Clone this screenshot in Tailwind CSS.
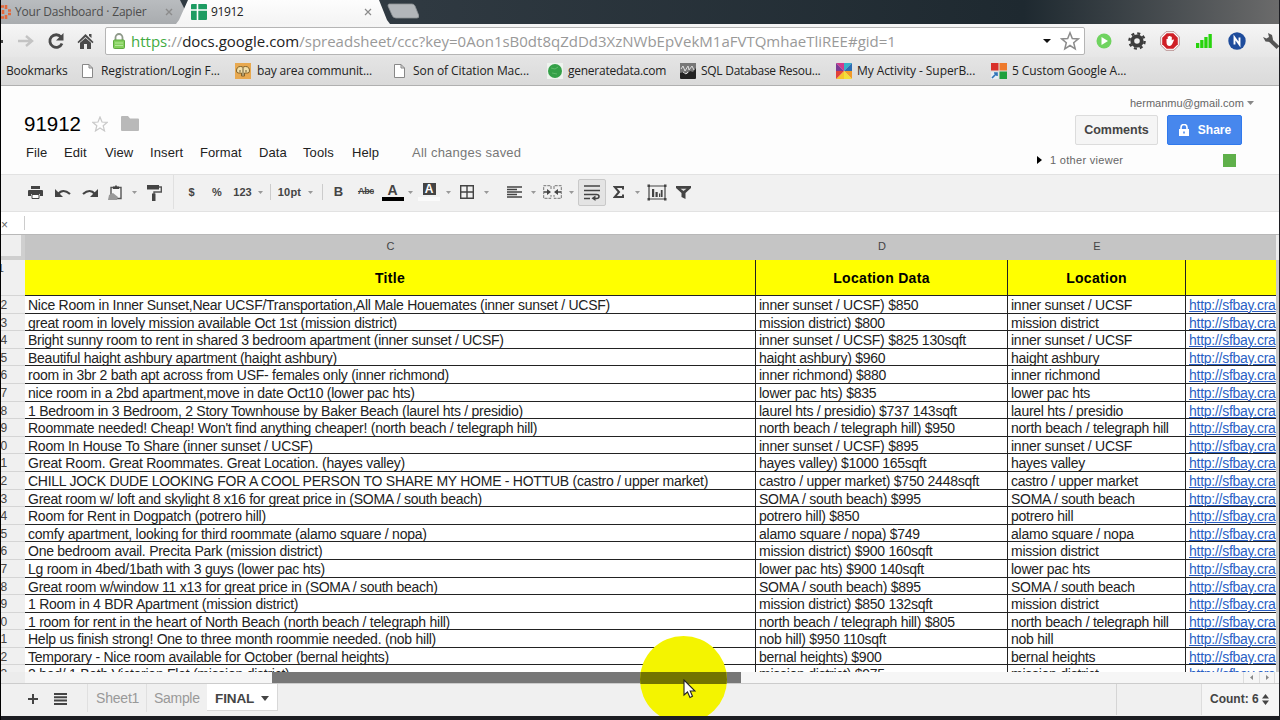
<!DOCTYPE html>
<html lang="en">
<head>
    <meta charset="UTF-8">
    <meta name="viewport" content="width=device-width, initial-scale=1.0">
    <title>91912</title>
    <script src="https://cdn.jsdelivr.net/npm/@tailwindcss/browser@4"></script>
</head>
<body class="bg-black overflow-hidden">
    <div class="relative w-[1280px] h-[720px] px-px flex flex-col overflow-hidden bg-[#1c1d22] font-['Liberation_Sans',Arial,sans-serif] text-[#222]">

        <!-- Tab strip -->
        <div class="h-6 shrink-0 flex items-start bg-linear-to-r from-[#303a42] from-30% via-[#1e2930] via-80% to-[#6b6b6b] font-['Open_Sans',sans-serif] text-[12px] whitespace-nowrap">
            <div class="w-[183px] h-6 flex items-center bg-linear-to-b from-[#b9bcbf] to-[#a9acaf] text-[#4d4d4d] [clip-path:polygon(0_0,179px_0,183px_8px,183px_24px,0_24px)]">
                <svg class="w-[10px] h-4 shrink-0" viewBox="0 0 10 16" fill="none" stroke="#e2683c" stroke-width="2.6"><path d="M0 2.5h3M0 13.5h3M5 1v4M7 6.5h3M7 10h3M5 11v4M2 6v4"/></svg>
                <span class="ml-1 w-[150px] leading-6 -mt-px tracking-[-0.2px]">Your Dashboard · Zapier</span>
                <svg class="w-2 h-2" viewBox="0 0 8 8" stroke="#8b8b8b" stroke-width="1.4"><path d="M1 1l6 6M7 1L1 7"/></svg>
            </div>
            <div class="-ml-[8px] w-[214px] h-6 flex items-center bg-linear-to-b from-[#fdfdfd] to-[#f4f4f4] [clip-path:polygon(12px_0,203px_0,211px_20px,214px_24px,0_24px,3px_20px)]">
                <svg class="ml-[15px] w-4 h-4" viewBox="0 0 16 16"><rect width="16" height="16" rx="1" fill="#1d9c62"/><path d="M6.5 0v16M0 6h16" stroke="#fff" stroke-width="1.6"/></svg>
                <span class="ml-1 w-[153px] leading-6 -mt-px tracking-[-0.4px]">91912</span>
                <svg class="w-2 h-2" viewBox="0 0 8 8" stroke="#8b8b8b" stroke-width="1.2"><path d="M1 1l6 6M7 1L1 7"/></svg>
            </div>
            <svg class="w-8 h-4 mt-[3px] -ml-[3px]" viewBox="0 0 32 16"><path d="M2 1h23q2 0 3 2l4 10q0 2-2 2H9q-3 0-4-3L1 3q0-2 1-2z" fill="#b2b6ba" stroke="#8d9296" stroke-width=".8"/></svg>
        </div>

        <!-- Address bar -->
        <div class="h-[33px] pt-px shrink-0 flex items-center bg-linear-to-b from-[#f6f6f6] to-[#e6e6e6]">
            <svg class="w-[34px] h-5 shrink-0" viewBox="0 0 34 20"><path d="M0 9h2v3H0z" fill="#444"/><path d="M17 10h12M25 5l6 5-6 5" fill="none" stroke="#c3c3c3" stroke-width="2.4"/></svg>
            <svg class="ml-3 w-[18px] h-[18px] shrink-0" viewBox="0 0 18 18"><path d="M14 5A6.3 6.3 0 1 0 15 11.500" fill="none" stroke="#4b4b4b" stroke-width="2.8"/><path d="M16.500 1v7.500H9z" fill="#4b4b4b"/></svg>
            <svg class="ml-3 w-[17px] h-[17px] shrink-0" viewBox="0 0 17 17" fill="#4b4b4b"><path d="M8.500 1L16.500 9l-1 1.200L8.500 4 1.500 10.200.5 9z"/><path d="M3 9.800L8.500 5l5.500 4.800V16h-4v-5H7v5H3zM12 1h2.500v4L12 3z"/></svg>
            <div class="ml-[11px] w-[980px] h-[28px] shrink-0 flex items-center bg-white border border-[#b5b5b5] rounded-[2px] font-['Open_Sans',sans-serif] text-[15px] text-[#999] whitespace-nowrap">
                <svg class="ml-[7px] w-3 h-4" viewBox="0 0 12 16"><path d="M2.500 8V4.500a3.500 3.500 0 0 1 7 0V8" fill="none" stroke="#8f9a8a" stroke-width="1.800"/><rect x=".5" y="7" width="11" height="8.500" rx="1" fill="#83d05c" stroke="#5fa941"/><path d="M2 10h8M2 12.500h8" stroke="#b5e79a"/></svg>
                <span class="ml-[6px] w-[912px] shrink-0 leading-6"><span class="text-[#3fab3f]">https</span>://<span class="text-[#222]">docs.google.com</span>/spreadsheet/ccc?key=0Aon1sB0dt8qZdDd3XzNWbEpVekM1aFVTQmhaeTliREE#gid=1</span>
                <svg class="w-2 h-1 shrink-0" viewBox="0 0 8 4"><path d="M0 0h8L4 4z" fill="#111"/></svg>
                <svg class="ml-[9px] w-5 h-5 shrink-0" viewBox="0 0 20 20"><path d="M10 1.800l2.300 5.700 6 .4-4.600 3.900 1.500 6L10 14.500l-5.200 3.300 1.500-6L1.700 7.900l6-.4z" fill="#fff" stroke="#8c8c8c" stroke-width="1.500"/></svg>
            </div>
            <svg class="ml-[11px] w-4 h-4 shrink-0" viewBox="0 0 16 16"><circle cx="8" cy="8" r="7.500" fill="#6fd35f"/><path d="M5.500 4l6.500 4-6.500 4z" fill="#fff"/></svg>
            <svg class="ml-4 w-[18px] h-[18px] shrink-0" viewBox="0 0 18 18"><circle cx="9" cy="9" r="4.700" fill="none" stroke="#3c3c3c" stroke-width="3.800"/><circle cx="9" cy="9" r="7.600" fill="none" stroke="#3c3c3c" stroke-width="2.400" stroke-dasharray="3 2.970"/></svg>
            <svg class="ml-[14px] w-5 h-5 shrink-0" viewBox="0 0 20 20"><path d="M6 .7h8L19.300 6v8L14 19.300H6L.7 14V6z" fill="#fff" stroke="#a77" stroke-width=".8"/><path d="M6.700 2.200h6.600l4.500 4.500v6.600l-4.500 4.500H6.700l-4.500-4.500V6.700z" fill="#cf1f26"/><path d="M6.500 11V8h1.200V5.500h1.200V5h1.600v.8h1.300v3.700l1.300-1.300.9.800-1.800 4q-1 2-2.700 2-3 0-3-4z" fill="#fff"/></svg>
            <svg class="ml-4 w-4 h-4 shrink-0" viewBox="0 0 16 16" fill="#27d40c"><path d="M0 10h3.300v5H0zM4.200 7h3.300v8H4.200zM8.300 4h3.300v11H8.300zM12.500 1h3.300v14h-3.300z"/></svg>
            <svg class="ml-4 w-[18px] h-[18px] shrink-0" viewBox="0 0 18 18"><circle cx="9" cy="9" r="8.700" fill="#1e4c9c"/><path d="M6.500 12.500v-7l5 7v-7" fill="none" stroke="#fff" stroke-width="1.900"/></svg>
            <svg class="ml-4 w-[17px] h-[18px] shrink-0" viewBox="0 0 17 18"><path d="M8 8l8 7.500" stroke="#555" stroke-width="4"/><path d="M1 5l2.500 4.500 5 .5 2.500-2.500L10 3 6 1l1 4-2.500 1.500z" fill="#555"/></svg>
        </div>

        <!-- Bookmarks bar -->
        <div class="h-[29px] shrink-0 flex items-center bg-linear-to-b from-[#e4e4e4] to-[#dadada] border-b border-[#b0b0b0] font-['Open_Sans',sans-serif] text-[12px] tracking-[-0.08px] whitespace-nowrap">
            <span class="ml-[5px] w-[76px] shrink-0 tracking-[-0.2px]">Bookmarks</span>
            <svg class="w-[11px] h-[14px] shrink-0" viewBox="0 0 11 14"><path d="M.5.5h6.500l3.500 3.500v9.500H.5zM7 .5V4h3.500" fill="#fff" stroke="#888"/></svg>
            <span class="ml-2 w-[134px] shrink-0">Registration/Login F...</span>
            <svg class="w-4 h-4 shrink-0" viewBox="0 0 16 16"><rect width="16" height="16" fill="#e8a950"/><path d="M1.500 8q0-4.500 4-4.500 2 0 2.500 1 .5-1 2.500-1 4 0 4 4.500 0 2-2 2h-3v3H6.500v-3h-3q-2 0-2-2z" fill="#f2dfa9" stroke="#806029"/><path d="M8 4.500v8M5 7v2M11 7v2" stroke="#6b5a38"/></svg>
            <span class="ml-[6px] w-[137px] shrink-0 tracking-[-0.15px]">bay area communit...</span>
            <svg class="w-[11px] h-[14px] shrink-0" viewBox="0 0 11 14"><path d="M.5.5h6.500l3.500 3.500v9.500H.5zM7 .5V4h3.500" fill="#fff" stroke="#888"/></svg>
            <span class="ml-2 w-[134px] shrink-0">Son of Citation Mac...</span>
            <svg class="w-4 h-4 shrink-0" viewBox="0 0 16 16"><rect width="16" height="16" fill="#eef3ee"/><circle cx="8" cy="8" r="7" fill="#34a048"/><path d="M4 5l4 1 3-2M5 10l5 1" stroke="#5cba69" fill="none"/></svg>
            <span class="ml-[5px] w-[112px] shrink-0 tracking-[-0.25px]">generatedata.com</span>
            <svg class="w-4 h-4 shrink-0" viewBox="0 0 16 16"><rect width="16" height="16" rx="1" fill="#222"/><path d="M0 0h16v5l-3 4-3-1-3 3-3-2-4 1z" fill="#777"/><path d="M1 6l2-3 2 5 3-5 1 4 3-4 2 4M3 9l3 2 2-2" stroke="#ddd" fill="none"/></svg>
            <span class="ml-[5px] w-[135px] shrink-0 tracking-[-0.27px]">SQL Database Resou...</span>
            <svg class="w-4 h-4 shrink-0" viewBox="0 0 16 16"><path d="M8 8L0 0h8z" fill="#d13a8c"/><path d="M8 8V0h8z" fill="#35b3c9"/><path d="M8 8l8-8v8z" fill="#2b6cb4"/><path d="M8 8h8v8z" fill="#f09a2a"/><path d="M8 8l8 8H8z" fill="#f3e03a"/><path d="M8 8v8H0z" fill="#f7c52e"/><path d="M8 8l-8 8V8z" fill="#e2413a"/><path d="M8 8H0V0z" fill="#7d3a94"/></svg>
            <span class="ml-[5px] w-[134px] shrink-0">My Activity - SuperB...</span>
            <svg class="w-4 h-4 shrink-0" viewBox="0 0 16 16"><path d="M0 0h7.500v7.500H0z" fill="#d9302a"/><path d="M8.500 0H16v7.500H8.500z" fill="#ee7a2c"/><path d="M8.500 8.500H16V16H8.500z" fill="#1fa03c"/><path d="M0 9h7.500v7H0z" fill="#e4ecf4"/><path d="M1 15l5-5M3 10h3v3" stroke="#2d74b8" stroke-width="1.600" fill="none"/></svg>
            <span class="ml-[5px]">5 Custom Google A...</span>
        </div>

        <!-- Document header -->
        <div class="h-[88px] shrink-0 flex justify-between bg-[#fdfdfd]">
            <div class="pl-[23px] pt-6">
                <div class="h-[27px] flex items-center">
                    <h1 class="w-[68px] text-[20.5px] leading-[27px] text-black">91912</h1>
                    <svg class="w-4 h-4" viewBox="0 0 16 16"><path d="M8 1l2 5 5.300.3-4.100 3.400 1.300 5.200L8 12l-4.500 2.900 1.300-5.200L.7 6.300 6 6z" fill="none" stroke="#c9c9c9" stroke-width="1.200"/></svg>
                    <svg class="ml-[13px] w-[18px] h-[15px]" viewBox="0 0 18 15"><path d="M1 0h6l2 2.500h8q1 0 1 1V14q0 1-1 1H1q-1 0-1-1V1q0-1 1-1z" fill="#b9b9b9"/></svg>
                </div>
                <div class="mt-[6px] pl-[2px] h-5 flex items-center text-[13px] leading-5 tracking-[0.1px] whitespace-nowrap">
                    <span class="w-[38px]">File</span>
                    <span class="w-[41px]">Edit</span>
                    <span class="w-[45px]">View</span>
                    <span class="w-[50px]">Insert</span>
                    <span class="w-[59px]">Format</span>
                    <span class="w-[44px]">Data</span>
                    <span class="w-[49px]">Tools</span>
                    <span class="w-[60px]">Help</span>
                    <span class="text-[#777] tracking-[0.22px]">All changes saved</span>
                </div>
            </div>
            <div class="w-[243px] pt-[9px] text-[11px] text-[#666]">
                <div class="h-4 pl-[94px] flex items-center whitespace-nowrap">
                    <span class="w-[117px]">hermanmu@gmail.com</span>
                    <svg class="w-[7px] h-1" viewBox="0 0 7 4"><path d="M0 0h7L3.500 4z" fill="#888"/></svg>
                </div>
                <div class="mt-1 pl-[39px] flex gap-[9px]">
                    <button class="w-[83px] h-[30px] border border-[#dcdcdc] rounded-[2px] bg-[#f5f5f5] font-bold text-[12.5px] text-[#444]">Comments</button>
                    <button class="w-[75px] h-[30px] pl-[1px] flex items-center justify-center gap-[9px] rounded-[2px] border border-[#3079ed] bg-[#4787ed] font-bold text-[12px] text-white">
                        <svg class="w-[10px] h-3" viewBox="0 0 10 12"><path d="M2 6V3.500a3 3 0 0 1 6 0V6" fill="none" stroke="#fff" stroke-width="1.600"/><path d="M0 5h10v7H0z" fill="#fff"/><path d="M4.200 7.500h1.600v2H4.200z" fill="#4787ed"/></svg>
                        Share
                    </button>
                </div>
                <div class="mt-2 pl-[1px] h-[14px] flex items-center whitespace-nowrap">
                    <svg class="w-[5px] h-2" viewBox="0 0 5 8"><path d="M0 0l5 4-5 4z" fill="#000"/></svg>
                    <span class="ml-[8px] w-[173px] tracking-[0.3px]">1 other viewer</span>
                    <span class="w-[13px] h-[13px] bg-[#5fb04a]"></span>
                </div>
            </div>
        </div>

        <!-- Toolbar -->
        <div class="h-[38px] shrink-0 pl-5 pb-[2px] flex items-center bg-[#f1f1f1] border-y border-[#e2e2e2] font-bold text-[11px] text-[#444] *:shrink-0 *:flex *:items-center *:justify-center">
            <span class="w-7"><svg class="w-[15px] h-[13px]" viewBox="0 0 15 13" fill="#444"><path d="M3 0h9v3H3zM1 4h13q1 0 1 1v5h-3V8H3v2H0V5q0-1 1-1z"/><path d="M4 8.500h7v4H4z" fill="#fff" stroke="#444"/></svg></span>
            <span class="w-[27px]"><svg class="w-4 h-[9px]" viewBox="0 0 16 9"><path d="M3 6q5-6 12 0" fill="none" stroke="#444" stroke-width="2.200"/><path d="M0 1v8h8z" fill="#444"/></svg></span>
            <span class="w-7"><svg class="w-4 h-[9px]" viewBox="0 0 16 9"><path d="M13 6Q8 0 1 6" fill="none" stroke="#444" stroke-width="2.200"/><path d="M16 1v8H8z" fill="#444"/></svg></span>
            <span class="w-[22px]"><svg class="w-[15px] h-[17px]" viewBox="0 0 15 17"><path d="M3 3.500h10v11H3z" fill="#f7f7f7" stroke="#555" stroke-width="1.400"/><path d="M5 2.500h2q1-3 2 0h2V5H5z" fill="#444"/><path d="M0 16l1-5 4-2 5 4-1 3z" fill="#999"/></svg></span>
            <span class="w-4"><svg class="w-[5px] h-[3px]" viewBox="0 0 5 3"><path d="M0 0h5L2.500 3z" fill="#999"/></svg></span>
            <span class="w-6"><svg class="w-[15px] h-[17px]" viewBox="0 0 15 17"><path d="M0 1h12v4.500H0z" fill="#444"/><path d="M12 3h2.300v5H7v2" fill="none" stroke="#555" stroke-width="1.400"/><path d="M5 9.500h3.500V17H5z" fill="#444"/></svg></span>
            <span class="w-[14px]"><i class="w-px h-[34px] bg-[#e0e0e0]"></i></span>
            <span class="w-[23px]">$</span>
            <span class="w-7">%</span>
            <span class="w-[23px]">123</span>
            <span class="w-3"><svg class="w-[5px] h-[3px]" viewBox="0 0 5 3"><path d="M0 0h5L2.500 3z" fill="#999"/></svg></span>
            <span class="w-2"><i class="w-px h-4 bg-[#ccc]"></i></span>
            <span class="w-[31px] tracking-[0.2px]">10pt</span>
            <span class="w-[10px]"><svg class="w-[5px] h-[3px]" viewBox="0 0 5 3"><path d="M0 0h5L2.500 3z" fill="#999"/></svg></span>
            <span class="w-[14px]"><i class="w-px h-4 bg-[#ccc]"></i></span>
            <span class="w-[19px] text-[13px] font-black">B</span>
            <span class="w-9 text-[9px] line-through tracking-[-0.3px]">Abc</span>
            <span class="w-[17px] flex-col text-[14px] leading-[14px]">A<i class="w-[22px] h-[4px] bg-black"></i></span>
            <span class="w-[19px]"><svg class="w-[5px] h-[3px]" viewBox="0 0 5 3"><path d="M0 0h5L2.500 3z" fill="#999"/></svg></span>
            <span class="w-[18px] flex-col"><b class="w-[13px] h-3 text-center text-[12px] leading-3 bg-[#444] text-white">A</b><i class="mt-[2px] w-[22px] h-[4px] bg-[#fafafa]"></i></span>
            <span class="w-5"><svg class="w-[5px] h-[3px]" viewBox="0 0 5 3"><path d="M0 0h5L2.500 3z" fill="#999"/></svg></span>
            <span class="w-[18px]"><svg class="w-[14px] h-[14px]" viewBox="0 0 14 14"><path d="M.7.7h12.600v12.600H.7zM7 0v14M0 7h14" fill="none" stroke="#444" stroke-width="1.400"/></svg></span>
            <span class="w-5"><svg class="w-[5px] h-[3px]" viewBox="0 0 5 3"><path d="M0 0h5L2.500 3z" fill="#999"/></svg></span>
            <span class="w-8 pl-1"><svg class="w-[15px] h-3" viewBox="0 0 15 12"><path d="M0 1h15M0 3.500h10M0 6h15M0 8.500h10M0 11h15" stroke="#444" stroke-width="1.300"/></svg></span>
            <span class="w-[10px]"><svg class="w-[5px] h-[3px]" viewBox="0 0 5 3"><path d="M0 0h5L2.500 3z" fill="#999"/></svg></span>
            <span class="w-7"><svg class="w-[19px] h-[14px]" viewBox="0 0 19 14"><path d="M8 4V.7H.7v12.600H8V10M11 4V.7h7.300v12.600H11V10" fill="none" stroke="#777" stroke-dasharray="3 1"/><path d="M1 7h3.500M18 7h-3.500" stroke="#444" stroke-width="1.500"/><path d="M4 4l4 3-4 3zM15 4l-4 3 4 3z" fill="#444"/></svg></span>
            <span class="w-[11px]"><svg class="w-[5px] h-[3px]" viewBox="0 0 5 3"><path d="M0 0h5L2.500 3z" fill="#999"/></svg></span>
            <span class="w-[30px]"><i class="w-7 h-[27px] flex items-center justify-center bg-[#e4e4e4] border border-[#c9c9c9] rounded-[2px]"><svg class="w-4 h-[17px]" viewBox="0 0 16 17"><path d="M0 2h16M0 6.500h16M0 10.500h12.500q2.500 0 2.500 2t-2.500 2H10M0 14.500h6" fill="none" stroke="#444" stroke-width="1.500"/><path d="M11.500 11.500v5.500l-4-2.700z" fill="#444"/></svg></i></span>
            <span class="w-[22px]"><svg class="w-[11px] h-3" viewBox="0 0 11 12"><path d="M10 3.500V1H1.700L6 6l-4.300 5H10V8.500" fill="none" stroke="#444" stroke-width="2"/></svg></span>
            <span class="w-4"><svg class="w-[5px] h-[3px]" viewBox="0 0 5 3"><path d="M0 0h5L2.500 3z" fill="#999"/></svg></span>
            <span class="w-[23px]"><svg class="w-5 h-[17px]" viewBox="0 0 20 17"><path d="M2 2h16v13H2z" fill="none" stroke="#444" stroke-width="1.200"/><path d="M.5.5H3v2.500H.5zM17 .5h2.500V3H17zM.5 14H3v2.500H.5zM17 14h2.500v2.500H17zM5 5h2.200v8H5zM8.500 8h2.200v5H8.500zM12 9.500h1.200V13H12zM13.800 6h1.800v7h-1.800z" fill="#444"/></svg></span>
            <span class="w-[30px]"><svg class="w-[15px] h-[13px]" viewBox="0 0 15 13"><path d="M0 0h15v2L9.500 7v6L5.500 11V7L0 2z" fill="#444"/><path d="M4.500 2.800h6L7.500 5z" fill="#ddd"/></svg></span>
        </div>

        <!-- Formula bar -->
        <div class="h-[22px] shrink-0 flex items-center bg-white text-[12px] text-[#666]">
            <span class="w-[23px] pt-[3px] leading-4">×</span>
            <span class="w-px h-[14px] bg-[#ccc]"></span>
        </div>

        <!-- Column headings -->
        <div class="h-[26px] shrink-0 flex bg-[#c5c5c5] border-t border-[#b8b8b8] text-[11px] leading-[23px] text-center text-[#444]">
            <span class="w-6 pr-1 pb-[4px] bg-[#cfcfcf]"><i class="block h-full bg-[#efefef]"></i></span>
            <span class="w-[731px]">C</span>
            <span class="w-[252px]">D</span>
            <span class="w-[178px]">E</span>
            <span class="grow"></span>
            <span class="w-[3px] bg-[#ececec]"></span>
        </div>

        <!-- Cells -->
        <div class="h-[412px] shrink-0 flex overflow-hidden bg-white">
            <div class="w-[1275px] shrink-0 overflow-hidden">
                <div class="h-9 flex text-[14px] leading-[36px] tracking-[0.3px] font-bold text-center text-black">
                    <span class="w-6 shrink-0 bg-[#f0f0f0] border-b border-[#d5d5d5] text-[11px] leading-4 font-normal text-[#444]"><i class="block -ml-[5px] w-[10px] not-italic">1</i></span>
                    <span class="w-[731px] shrink-0 bg-[#ff0] border-r border-b border-[#222]">Title</span>
                    <span class="w-[252px] shrink-0 bg-[#ff0] border-r border-b border-[#222]">Location Data</span>
                    <span class="w-[178px] shrink-0 bg-[#ff0] border-r border-b border-[#222]">Location</span>
                    <span class="w-[92px] shrink-0 bg-[#ff0] border-b border-[#222]"></span>
                </div>
                <div id="rows"></div>
            </div>
            <div class="grow bg-[#c9c9c9]"></div>
        </div>

        <!-- Horizontal scrollbar -->
        <div class="h-3 shrink-0 flex bg-[#f6f6f6] border-b border-[#ccc]">
            <span class="w-6 bg-[#ececec]"></span>
            <span class="w-[247px]"></span>
            <span class="w-[469px] bg-[#777]"></span>
            <span class="w-[502px]"></span>
            <span class="w-4 flex items-center justify-center border-l border-[#ddd]"><svg class="w-[3px] h-[5px]" viewBox="0 0 3 5"><path d="M3 0v5L0 2.500z" fill="#888"/></svg></span>
            <span class="w-4 flex items-center justify-center border-x border-[#ddd]"><svg class="w-[3px] h-[5px]" viewBox="0 0 3 5"><path d="M0 0v5l3-2.500z" fill="#888"/></svg></span>
        </div>

        <!-- Sheet tabs -->
        <div class="h-8 shrink-0 flex items-start bg-[#f0f0f0] text-[14px] leading-[29px] text-[#999] whitespace-nowrap">
            <svg class="ml-[27px] mt-[10px] w-[10px] h-[10px]" viewBox="0 0 10 10"><path d="M5 0v10M0 5h10" stroke="#444" stroke-width="2"/></svg>
            <svg class="ml-4 mt-[9px] w-[13px] h-3" viewBox="0 0 13 12"><path d="M0 1h13M0 4.300h13M0 7.600h13M0 11h13" stroke="#444" stroke-width="2"/></svg>
            <span class="ml-5 w-[59px] h-7 pl-2 border-l border-[#e0e0e0] tracking-[-0.2px]">Sheet1</span>
            <span class="w-[61px] h-7 pl-[7px] border-l border-[#e0e0e0] tracking-[-0.3px]">Sample</span>
            <span class="w-[71px] h-[27px] pt-[2px] pl-2 flex items-center bg-white border-r border-b border-[#d8d8d8] font-bold text-[13.5px] text-[#444]"><span class="w-[46px] tracking-[-0.1px]">FINAL</span><svg class="w-2 h-[5px]" viewBox="0 0 8 5"><path d="M0 0h8L4 5z" fill="#444"/></svg></span>
            <span class="ml-[838px] w-[85px] h-[31px] border-l border-[#d5d5d5]"></span>
            <span class="grow h-[31px] pl-2 flex items-center bg-[#f5f5f5] border-l border-[#ddd] font-bold text-[12px] text-[#444]"><span class="w-[52px]">Count: 6</span><svg class="w-[7px] h-[11px]" viewBox="0 0 7 11"><path d="M0 4.500L3.500 0 7 4.500zM0 6.500h7L3.500 11z" fill="#444"/></svg></span>
        </div>

        <!-- Click highlight and pointer -->
        <div class="absolute left-[640px] top-[636px] w-[87px] h-[80px] overflow-hidden">
            <div class="w-[87px] h-[87px] rounded-full overflow-hidden bg-[#f4f400] pt-9">
                <div class="h-3 bg-[#737400]"></div>
            </div>
        </div>
        <svg class="absolute left-[683px] top-[679px] w-[13px] h-5" viewBox="0 0 13 20"><path d="M1 1v15l3.500-3 2.500 5.500 2.500-1.200L7.200 12H12z" fill="#fff" stroke="#222" stroke-width="1.100"/></svg>
        <div class="absolute inset-y-0 left-0 w-px bg-black"></div>
    </div>

    <script>
        const rows = [
            ["Nice Room in Inner Sunset,Near UCSF/Transportation,All Male Houemates (inner sunset / UCSF)", "inner sunset / UCSF) $850", "inner sunset / UCSF"],
            ["great room in lovely mission available Oct 1st (mission district)", "mission district) $800", "mission district"],
            ["Bright sunny room to rent in shared 3 bedroom apartment (inner sunset / UCSF)", "inner sunset / UCSF) $825 130sqft", "inner sunset / UCSF"],
            ["Beautiful haight ashbury apartment (haight ashbury)", "haight ashbury) $960", "haight ashbury"],
            ["room in 3br 2 bath apt across from USF- females only (inner richmond)", "inner richmond) $880", "inner richmond"],
            ["nice room in a 2bd apartment,move in date Oct10 (lower pac hts)", "lower pac hts) $835", "lower pac hts"],
            ["1 Bedroom in 3 Bedroom, 2 Story Townhouse by Baker Beach (laurel hts / presidio)", "laurel hts / presidio) $737 143sqft", "laurel hts / presidio"],
            ["Roommate needed! Cheap! Won't find anything cheaper! (north beach / telegraph hill)", "north beach / telegraph hill) $950", "north beach / telegraph hill"],
            ["Room In House To Share (inner sunset / UCSF)", "inner sunset / UCSF) $895", "inner sunset / UCSF"],
            ["Great Room. Great Roommates. Great Location. (hayes valley)", "hayes valley) $1000 165sqft", "hayes valley"],
            ["CHILL JOCK DUDE LOOKING FOR A COOL PERSON TO SHARE MY HOME - HOTTUB (castro / upper market)", "castro / upper market) $750 2448sqft", "castro / upper market"],
            ["Great room w/ loft and skylight 8 x16 for great price in (SOMA / south beach)", "SOMA / south beach) $995", "SOMA / south beach"],
            ["Room for Rent in Dogpatch (potrero hill)", "potrero hill) $850", "potrero hill"],
            ["comfy apartment, looking for third roommate (alamo square / nopa)", "alamo square / nopa) $749", "alamo square / nopa"],
            ["One bedroom avail. Precita Park (mission district)", "mission district) $900 160sqft", "mission district"],
            ["Lg room in 4bed/1bath with 3 guys (lower pac hts)", "lower pac hts) $900 140sqft", "lower pac hts"],
            ["Great room w/window 11 x13 for great price in (SOMA / south beach)", "SOMA / south beach) $895", "SOMA / south beach"],
            ["1 Room in 4 BDR Apartment (mission district)", "mission district) $850 132sqft", "mission district"],
            ["1 room for rent in the heart of North Beach (north beach / telegraph hill)", "north beach / telegraph hill) $805", "north beach / telegraph hill"],
            ["Help us finish strong! One to three month roommie needed. (nob hill)", "nob hill) $950 110sqft", "nob hill"],
            ["Temporary - Nice room available for October (bernal heights)", "bernal heights) $900", "bernal heights"],
            ["2 bed/ 1 Bath Victorian Flat (mission district)", "mission district) $975", "mission district"]
        ];

        document.getElementById('rows').innerHTML = rows.map((row, i) => `
            <div class="h-[17.6px] flex text-[14px] leading-[19px] tracking-[-0.26px] whitespace-nowrap *:shrink-0 *:overflow-hidden">
                <span class="w-6 bg-[#f0f0f0] border-b border-[#d5d5d5] text-[12px] text-[#444]"><i class="w-[6px] flex justify-end not-italic">${i + 2}</i></span>
                <span class="w-[731px] pl-[3px] border-r border-b border-[#222]">${row[0]}</span>
                <span class="w-[252px] pl-[3px] border-r border-b border-[#222]">${row[1]}</span>
                <span class="w-[178px] pl-[3px] border-r border-b border-[#222]">${row[2]}</span>
                <span class="w-[92px] pl-[3px] border-b border-[#222] text-[#2a5fc4] underline">http://sfbay.cra</span>
            </div>`).join('');
    </script>
</body>
</html>
